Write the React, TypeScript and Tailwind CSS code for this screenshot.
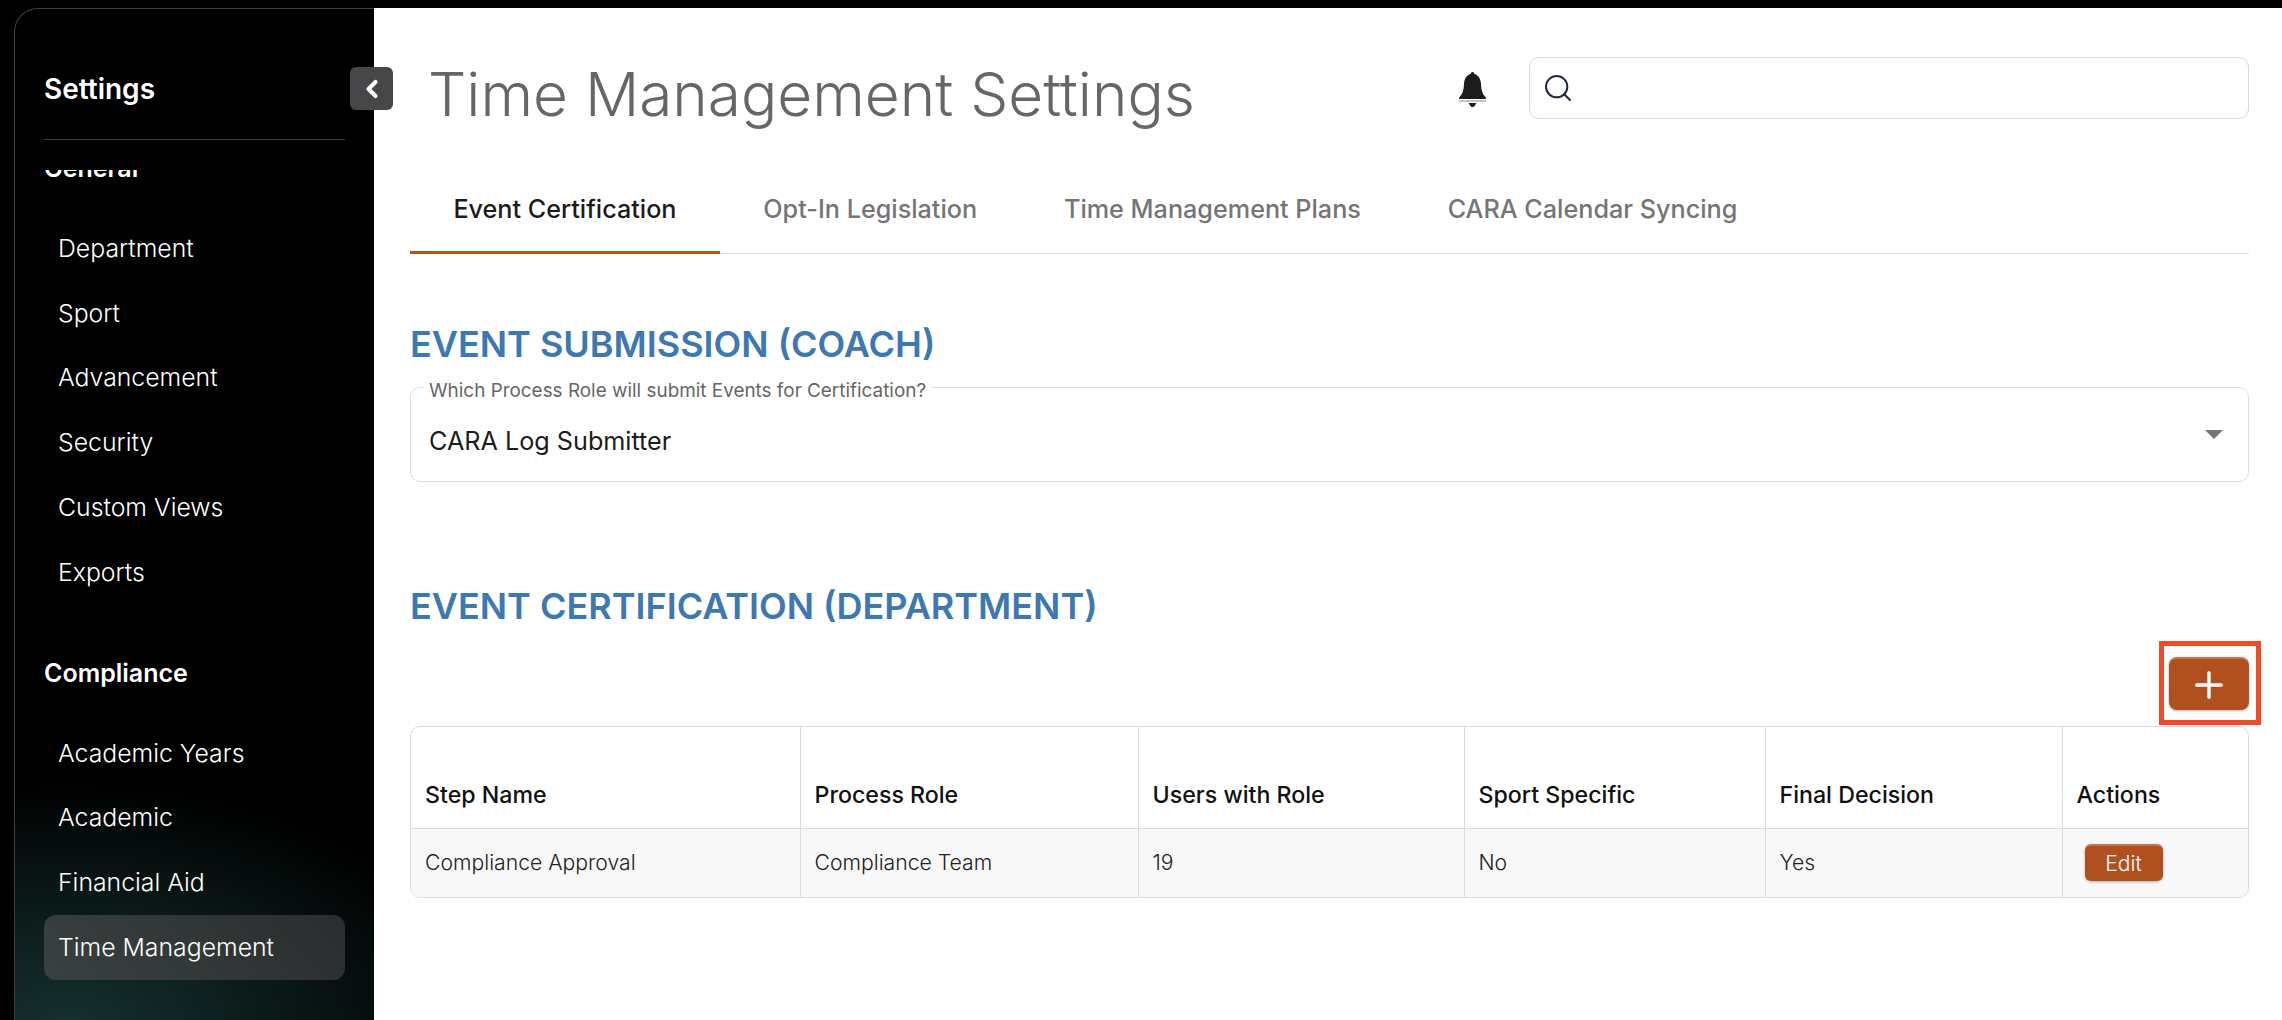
import { ChevronLeft, Plus, Search } from 'lucide-react';

const generalItems = ['Department', 'Sport', 'Advancement', 'Security', 'Custom Views', 'Exports'];
const complianceItems = ['Academic Years', 'Academic', 'Financial Aid', 'Time Management'];
const tabs = ['Event Certification', 'Opt-In Legislation', 'Time Management Plans', 'CARA Calendar Syncing'];

const columns = [
  { name: 'Step Name', width: 'w-[389px]' },
  { name: 'Process Role', width: 'w-[338px]' },
  { name: 'Users with Role', width: 'w-[326px]' },
  { name: 'Sport Specific', width: 'w-[301px]' },
  { name: 'Final Decision', width: 'w-[297px]' },
  { name: 'Actions', width: 'w-[186px]' },
];

function NavItem({ label }: { label: string }) {
  const active = label === 'Time Management';
  return (
    <div
      className={`flex h-[64.800px] items-center rounded-[12px] px-[14px] text-[24.800px] font-light text-white ${
        active ? 'bg-[linear-gradient(45deg,#3a4141,#2a2d2d)]' : ''
      }`}
    >
      {label}
    </div>
  );
}

function BellIcon() {
  return (
    <svg viewBox="0 0 27 35" className="h-[35px] w-[27px]">
      <path
        fill="#1c1c1c"
        d="M13.5 0c.9 0 1.500.7 1.600 1.700C19.500 3 21.800 7 22 12c.2 6 1.400 10 4 12.500.6.6 1 1.300 1 2.500H0c0-1.200.4-1.900 1-2.500C3.600 22 4.800 18 5 12 5.200 7 7.500 3 11.900 1.700 12 .7 12.600 0 13.500 0z"
      />
      <rect x="0" y="28.500" width="27" height="1" fill="#8a8a8a" />
      <path fill="#1c1c1c" d="M9.500 31h8l-2 3.200c-.9 1.100-3.100 1.100-4 0z" />
    </svg>
  );
}

export default function App() {
  return (
    <div className="flex h-[1020px] w-[2282px] overflow-hidden bg-black pt-2 font-['Inter',sans-serif]">
      {/* Sidebar */}
      <aside className="relative h-full w-[374px] shrink-0 pl-[14px]">
        <div className="flex h-full flex-col overflow-hidden rounded-tl-[24px] border-l border-t border-[#3d4241] bg-[radial-gradient(ellipse_420px_240px_at_15%_100%,#15302f_0%,#081413_60%,#000000_100%)] pl-[29px] pr-[29px]">
          <div className="mt-[56px] h-[75px] border-b border-[#3f3f3f] text-[28px] font-semibold leading-[48px] text-white">
            Settings
          </div>
          <div className="mt-[30px] flex-1 overflow-hidden">
            <div className="-mt-[18px]">
              <div className="mb-[32px] h-[32px] text-[25px] font-semibold leading-[32px] text-white">General</div>
              {generalItems.map((item) => (
                <NavItem key={item} label={item} />
              ))}
              <div className="mb-[32px] mt-[52px] h-[32px] text-[25px] font-semibold leading-[32px] text-white">
                Compliance
              </div>
              {complianceItems.map((item) => (
                <NavItem key={item} label={item} />
              ))}
            </div>
          </div>
        </div>
        <button className="absolute left-[350px] top-[59px] flex h-[43px] w-[43px] items-center justify-center rounded-[6px] bg-[#464749]">
          <ChevronLeft size={28} strokeWidth={3.5} className="text-white" />
        </button>
      </aside>

      {/* Main */}
      <main className="h-full flex-1 bg-white pl-[36px] pr-[33px] pt-[49px]">
        <header className="flex h-[62px] items-center">
          <h1 className="ml-[18px] mt-[14px] text-[60.300px] font-light leading-none text-[#666666]">
            Time Management Settings
          </h1>
          <div className="ml-auto mr-[43px] mt-[2px]">
            <BellIcon />
          </div>
          <div className="flex h-[62px] w-[720px] items-center rounded-[10px] border border-[#d9d9d9] pl-[12px]">
            <Search size={32} strokeWidth={1.5} className="text-[#1f2937]" />
          </div>
        </header>

        <nav className="mt-[49px] flex h-[85.500px] border-b border-[#e0e0e0]">
          {tabs.map((tab, i) => (
            <div
              key={tab}
              className={`flex h-[85.500px] items-center border-b-[3px] px-[43.400px] pt-[1.500px] text-[25.200px] font-medium ${
                i === 0 ? 'border-[#b9511f] text-[#1c1c1c]' : 'border-transparent text-[#757575]'
              }`}
            >
              {tab}
            </div>
          ))}
        </nav>

        <h2 className="mt-[69.500px] text-[36px] font-semibold leading-[42px] text-[#3d78b3]">EVENT SUBMISSION (COACH)</h2>
        <div className="relative mt-[22px] flex h-[95px] items-center rounded-[10px] border border-[#dedede] pl-[18px] pr-[25px]">
          <span className="absolute -top-[8px] left-[13px] bg-white px-[5px] text-[18.900px] leading-[22px] text-[#666666]">
            Which Process Role will submit Events for Certification?
          </span>
          <span className="mt-[14px] text-[25.200px] text-[#1c1c1c]">CARA Log Submitter</span>
          <span className="ml-auto h-0 w-0 border-x-[9px] border-t-[9px] border-x-transparent border-t-[#757575]" />
        </div>

        <h2 className="mt-[103px] text-[36px] font-semibold leading-[42px] text-[#3d78b3]">
          EVENT CERTIFICATION (DEPARTMENT)
        </h2>
        <div className="mt-[30px] flex justify-end">
          <div className="relative">
            <button className="flex h-[53px] w-[80px] items-center justify-center rounded-[8px] border-t-2 border-[#c2754f] bg-[#b1501f] shadow-[0_1px_3px_rgba(0,0,0,0.3)]">
              <Plus size={42} strokeWidth={1.900} className="text-white" />
            </button>
            <div className="absolute -bottom-[15px] -left-[10px] -right-[12px] -top-[16px] border-[5px] border-[#ee4b2b]" />
          </div>
        </div>

        <div className="mt-[16px] overflow-hidden rounded-[10px] border border-[#dcdcdc]">
          <table className="w-full table-fixed border-collapse">
            <colgroup>
              {columns.map((col) => (
                <col key={col.name} className={col.width} />
              ))}
            </colgroup>
            <thead>
              <tr className="h-[101px] border-b border-[#dcdcdc]">
                {columns.map((col, i) => (
                  <th
                    key={col.name}
                    className={`px-[14px] pb-[19px] pt-0 text-left align-bottom text-[23.200px] font-medium leading-[28px] text-[#111111] ${
                      i > 0 ? 'border-l border-[#dcdcdc]' : ''
                    }`}
                  >
                    {col.name}
                  </th>
                ))}
              </tr>
            </thead>
            <tbody>
              <tr className="h-[69px] bg-[#f8f8f8] text-[21.200px] font-light text-[#222222]">
                <td className="px-[14px]">Compliance Approval</td>
                <td className="border-l border-[#dcdcdc] px-[14px]">Compliance Team</td>
                <td className="border-l border-[#dcdcdc] px-[14px]">19</td>
                <td className="border-l border-[#dcdcdc] px-[14px]">No</td>
                <td className="border-l border-[#dcdcdc] px-[14px]">Yes</td>
                <td className="border-l border-[#dcdcdc] px-[22px]">
                  <button className="h-[37px] w-[78px] rounded-[6px] border-t-2 border-[#c2754f] bg-[#b1501f] text-[21px] font-light text-white shadow-[0_1px_3px_rgba(0,0,0,0.3)]">
                    Edit
                  </button>
                </td>
              </tr>
            </tbody>
          </table>
        </div>
      </main>
    </div>
  );
}
